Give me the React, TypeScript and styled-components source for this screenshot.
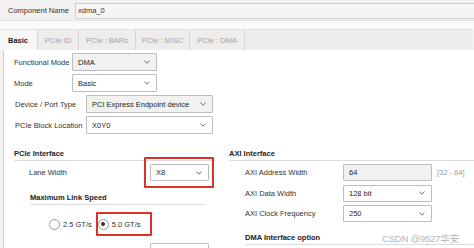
import React from "react";
import styled, { createGlobalStyle } from "styled-components";

const GlobalStyle = createGlobalStyle`
	html, body {
		margin: 0;
		padding: 0;
		background: #f2f1ef;
	}
	body {
		font-family: "Liberation Sans", Arial, sans-serif;
		font-size: 7.5px;
		color: #2a2a2a;
	}
`;

const Frame = styled.div`
	width: 474px;
	height: 248px;
	overflow: hidden;
	position: relative;
	background: #f2f1ef;
`;

const NameRow = styled.div`
	height: 20px;
	display: flex;
	align-items: center;
	padding-left: 8px;
`;

const NameLabel = styled.span`
	width: 67px;
	color: #333;
`;

const NameInput = styled.div`
	flex: 1;
	height: 14px;
	margin-top: 1px;
	border: 1px solid #cfcfcd;
	border-right: none;
	background: #f6f5f3;
	display: flex;
	align-items: center;
	padding-left: 2px;
	color: #333;
`;

const Band = styled.div`
	height: 8px;
	background: #fbfaf6;
	border-top: 1px solid #e2e1de;
`;

const TabBar = styled.div`
	height: 20px;
	display: flex;
	background: #eeedeb;
	border-top: 1px solid #e0dfdc;
	margin-right: 2px;
`;

const Tab = styled.div<{ $active?: boolean; $w: number }>`
	display: flex;
	align-items: center;
	justify-content: ${(p) => (p.$active ? "flex-start" : "center")};
	padding-left: ${(p) => (p.$active ? "8px" : "0")};
	box-sizing: border-box;
	width: ${(p) => p.$w}px;
	border-right: 1px solid #d6d5d2;
	background: ${(p) => (p.$active ? "#f7f7f6" : "#eeedeb")};
	color: ${(p) => (p.$active ? "#222" : "#a3a3a3")};
	font-weight: ${(p) => (p.$active ? "bold" : "normal")};
`;

const Panel = styled.div`
	margin-left: 3px;
	border-left: 1px solid #cdcdcd;
	background: #fff;
	height: 200px;
	padding: 3px 0 0 10px;
	box-sizing: border-box;
`;

const TopFields = styled.div`
	display: flex;
	flex-direction: column;
	gap: 3px;
`;

const Row = styled.div<{ $indent?: number; $h?: number; $mt?: number }>`
	display: flex;
	align-items: center;
	height: ${(p) => p.$h ?? 18}px;
	padding-left: ${(p) => p.$indent ?? 0}px;
	margin-top: ${(p) => p.$mt ?? 0}px;
`;

const Label = styled.span<{ $w: number }>`
	width: ${(p) => p.$w}px;
	flex-shrink: 0;
	color: #333;
	white-space: nowrap;
`;

const Field = styled.div<{ $w: number; $grey?: boolean }>`
	position: relative;
	width: ${(p) => p.$w}px;
	height: 100%;
	box-sizing: border-box;
	border: 1px solid #bdbdbd;
	border-radius: 1px;
	background: ${(p) => (p.$grey ? "#f1f1f0" : "#fff")};
	display: flex;
	align-items: center;
	justify-content: space-between;
	padding: 0 6px 0 5px;
	color: #1f1f1f;
	white-space: nowrap;
`;

const Columns = styled.div`
	display: grid;
	grid-template-columns: 201px 245px;
	column-gap: 14px;
	margin-top: 15px;
`;

const Column = styled.div`
	display: flex;
	flex-direction: column;
`;

const SectionTitle = styled.div<{ $indent?: number; $mt?: number; $mr?: number }>`
	font-weight: bold;
	line-height: 10px;
	padding-bottom: 1px;
	border-bottom: 1px solid #dcdcdc;
	margin-left: ${(p) => p.$indent ?? 0}px;
	margin-right: ${(p) => p.$mr ?? 0}px;
	margin-top: ${(p) => p.$mt ?? 0}px;
	color: #222;
`;

const Stack = styled.div<{ $mt?: number }>`
	display: flex;
	flex-direction: column;
	gap: 3.5px;
	margin-top: ${(p) => p.$mt ?? 0}px;
`;

const Highlight = styled.div<{ $inset: string }>`
	position: relative;
	display: flex;
	align-items: center;
	height: 100%;
	&::after {
		content: "";
		position: absolute;
		inset: ${(p) => p.$inset};
		border: 2px solid #d9322b;
		border-radius: 1px;
		pointer-events: none;
	}
`;

const RadioGroup = styled.div`
	display: flex;
	align-items: center;
	height: 12px;
	margin-top: 13px;
	padding-left: 35px;
	gap: 6px;
`;

const Radio = styled.label`
	display: flex;
	align-items: center;
	gap: 3px;
	color: #333;
`;

const Dot = styled.span<{ $on?: boolean }>`
	width: 9px;
	height: 9px;
	border-radius: 50%;
	border: 1px solid #9a9a9a;
	background: #fff;
	display: flex;
	align-items: center;
	justify-content: center;
	&::before {
		content: "";
		width: 4px;
		height: 4px;
		border-radius: 50%;
		background: ${(p) => (p.$on ? "#333" : "transparent")};
	}
`;

const Range = styled.span`
	margin-left: 5px;
	color: #9a9a9a;
`;

const Watermark = styled.div`
	position: absolute;
	left: 382px;
	top: 231px;
	font-family: "Liberation Sans", "Noto Sans CJK SC", sans-serif;
	font-size: 9.5px;
	color: #b5b5b5;
	letter-spacing: -0.2px;
`;

function Chevron() {
	return (
		<svg width="6" height="4" viewBox="0 0 6 4">
			<polyline points="0.5,0.6 3,3.2 5.5,0.6" fill="none" stroke="#6f6f6f" strokeWidth="1" />
		</svg>
	);
}

type SelectProps = { value?: string; w: number; grey?: boolean; arrow?: boolean };

function Select({ value, w, grey, arrow = true }: SelectProps) {
	return (
		<Field $w={w} $grey={grey}>
			<span>{value}</span>
			{arrow && <Chevron />}
		</Field>
	);
}

const tabs = [
	{ name: "Basic", w: 38, active: true },
	{ name: "PCIe ID", w: 41 },
	{ name: "PCIe : BARs", w: 57 },
	{ name: "PCIe : MISC", w: 54 },
	{ name: "PCIe : DMA", w: 55 },
];

export default function App() {
	return (
		<Frame>
			<GlobalStyle />
			<NameRow>
				<NameLabel>Component Name</NameLabel>
				<NameInput>xdma_0</NameInput>
			</NameRow>
			<Band />
			<TabBar>
				{tabs.map((t) => (
					<Tab key={t.name} $active={t.active} $w={t.w}>
						{t.name}
					</Tab>
				))}
			</TabBar>
			<Panel>
				<TopFields>
					<Row>
						<Label $w={58}>Functional Mode</Label>
						<Select value="DMA" w={85} grey />
					</Row>
					<Row>
						<Label $w={58}>Mode</Label>
						<Select value="Basic" w={85} />
					</Row>
					<Row $indent={1}>
						<Label $w={71}>Device / Port Type</Label>
						<Select value="PCI Express Endpoint device" w={127} grey />
					</Row>
					<Row $indent={1}>
						<Label $w={71}>PCIe Block Location</Label>
						<Select value="X0Y0" w={127} />
					</Row>
				</TopFields>
				<Columns>
					<Column>
						<SectionTitle>PCIe Interface</SectionTitle>
						<Row $indent={15} $h={17} $mt={3}>
							<Label $w={121}>Lane Width</Label>
							<Highlight $inset="-7px -5px -7px -6px">
								<Select value="X8" w={59} />
							</Highlight>
						</Row>
						<SectionTitle $indent={16} $mr={10} $mt={12}>
							Maximum Link Speed
						</SectionTitle>
						<RadioGroup>
							<Radio>
								<Dot />
								2.5 GT/s
							</Radio>
							<Highlight $inset="-6px -11px -6px -2px">
								<Radio>
									<Dot $on />
									5.0 GT/s
								</Radio>
							</Highlight>
						</RadioGroup>
						<Row $indent={15} $h={17} $mt={13}>
							<Label $w={121} />
							<Select w={59} />
						</Row>
					</Column>
					<Column>
						<SectionTitle>AXI Interface</SectionTitle>
						<Stack $mt={3}>
							<Row $indent={16} $h={17}>
								<Label $w={98}>AXI Address Width</Label>
								<Select value="64" w={89} grey arrow={false} />
								<Range>[32 - 64]</Range>
							</Row>
							<Row $indent={16} $h={17}>
								<Label $w={98}>AXI Data Width</Label>
								<Select value="128 bit" w={89} />
							</Row>
							<Row $indent={16} $h={17}>
								<Label $w={98}>AXI Clock Frequency</Label>
								<Select value="250" w={89} />
							</Row>
						</Stack>
						<SectionTitle $indent={16} $mt={11}>
							DMA Interface option
						</SectionTitle>
					</Column>
				</Columns>
			</Panel>
			<Watermark>CSDN @9527华安</Watermark>
		</Frame>
	);
}
